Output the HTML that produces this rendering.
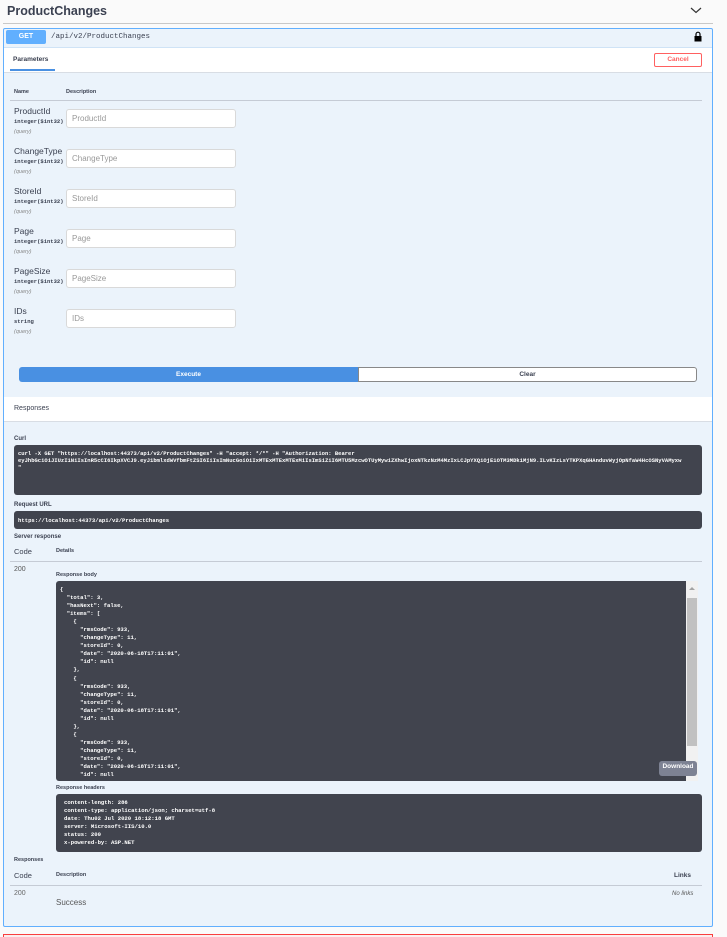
<!DOCTYPE html>
<html><head><meta charset="utf-8"><style>
*{margin:0;padding:0;box-sizing:border-box}
html,body{width:727px;height:937px;overflow:hidden}
body{background:#fafafa;position:relative;font-family:"Liberation Sans",sans-serif;color:#3b4151}
.a{position:absolute;white-space:nowrap}
.m{font-family:"Liberation Mono",monospace;font-weight:bold}
.dark{position:absolute;background:#41444e;border-radius:3px;overflow:hidden}
.inp{position:absolute;left:66px;width:170px;height:19px;background:#fff;border:1px solid #d9d9d9;border-radius:3px;font-size:8px;color:#999;padding:4px 0 0 5px}
.pn{font-size:8.5px;color:#3b4151}
.pt{font-size:5.5px;color:#3b4151}
.pq{font-size:5.5px;font-style:italic;color:#888}
.lbl{font-size:6px;font-weight:bold;color:#3b4151}
pre{font-family:"Liberation Mono",monospace;font-weight:bold;color:#fff;font-size:5.6px;line-height:8.05px;white-space:pre !important}
</style></head><body>
<div class="a" style="left:7px;top:4px;font-size:12.5px;font-weight:bold;color:#3b4151">ProductChanges</div>
<svg class="a" style="left:689px;top:5px" width="14" height="10" viewBox="0 0 14 10"><path d="M2 3 L7 7.5 L12 3" fill="none" stroke="#333" stroke-width="1.2"/></svg>
<div class="a" style="left:3px;top:23px;width:710px;height:1px;background:#c8c8c8"></div>
<div class="a" style="left:3px;top:28px;width:710px;height:899px;background:#ebf3fb;border:1px solid #61affe;border-radius:2px"></div>
<div class="a" style="left:6px;top:30px;width:40px;height:14px;background:#61affe;border-radius:2px;color:#fff;font-size:7px;font-weight:bold;text-align:center;line-height:14px">GET</div>
<div class="a m" style="left:51px;top:33px;font-size:7.5px;font-weight:normal;color:#3b4151">/api/v2/ProductChanges</div>
<svg class="a" style="left:694px;top:31px" width="8" height="11" viewBox="0 0 8 11"><path d="M2 5V3.2a2 2 0 0 1 4 0V5" fill="none" stroke="#000" stroke-width="1.2"/><rect x="0.5" y="5" width="7" height="5.5" fill="#000"/></svg>
<div class="a" style="left:4px;top:47px;width:708px;height:26px;background:#fff;border-top:1px solid #cfe3f6;border-bottom:1px solid #d8dde4"></div>
<div class="a" style="left:13px;top:56px;font-size:6.5px;font-weight:bold">Parameters</div>
<div class="a" style="left:10px;top:69px;width:45px;height:2px;background:#4990e2"></div>
<div class="a" style="left:654px;top:53px;width:48px;height:14px;border:1px solid #ff6060;border-radius:2px;color:#ff6060;font-size:6.5px;font-weight:bold;text-align:center;line-height:12px">Cancel</div>
<div class="a lbl" style="left:14px;top:89px;font-size:5.5px">Name</div>
<div class="a lbl" style="left:66px;top:89px;font-size:5.5px">Description</div>
<div class="a" style="left:10px;top:100px;width:692px;height:1px;background:#c5cbd5"></div>

<div class="a pn" style="left:14px;top:106px">ProductId</div><div class="a pt m" style="left:14px;top:118px">integer($int32)</div><div class="a pq" style="left:14px;top:129px">(query)</div><div class="inp" style="top:109px">ProductId</div>
<div class="a pn" style="left:14px;top:146px">ChangeType</div><div class="a pt m" style="left:14px;top:158px">integer($int32)</div><div class="a pq" style="left:14px;top:169px">(query)</div><div class="inp" style="top:149px">ChangeType</div>
<div class="a pn" style="left:14px;top:186px">StoreId</div><div class="a pt m" style="left:14px;top:198px">integer($int32)</div><div class="a pq" style="left:14px;top:209px">(query)</div><div class="inp" style="top:189px">StoreId</div>
<div class="a pn" style="left:14px;top:226px">Page</div><div class="a pt m" style="left:14px;top:238px">integer($int32)</div><div class="a pq" style="left:14px;top:249px">(query)</div><div class="inp" style="top:229px">Page</div>
<div class="a pn" style="left:14px;top:266px">PageSize</div><div class="a pt m" style="left:14px;top:278px">integer($int32)</div><div class="a pq" style="left:14px;top:289px">(query)</div><div class="inp" style="top:269px">PageSize</div>
<div class="a pn" style="left:14px;top:306px">IDs</div><div class="a pt m" style="left:14px;top:318px">string</div><div class="a pq" style="left:14px;top:329px">(query)</div><div class="inp" style="top:309px">IDs</div>

<div class="a" style="left:19px;top:367px;width:339px;height:15px;background:#4990e2;border-radius:3px 0 0 3px;color:#fff;font-size:6.5px;font-weight:bold;text-align:center;line-height:15px">Execute</div>
<div class="a" style="left:358px;top:367px;width:339px;height:15px;background:#fff;border:1px solid #888;border-radius:0 3px 3px 0;font-size:6.5px;font-weight:bold;text-align:center;line-height:13px">Clear</div>
<div class="a" style="left:4px;top:397px;width:708px;height:25px;background:#fff;border-bottom:1px solid #d8dde4"></div>
<div class="a" style="left:14px;top:405px;font-size:7px">Responses</div>

<div class="a lbl" style="left:14px;top:436px">Curl</div>
<div class="dark" style="left:14px;top:445px;width:688px;height:50px">
<div class="a m" style="left:4px;top:5px;font-size:5.5px;color:#fff;line-height:7px">curl -X GET "https://localhost:44373/api/v2/ProductChanges" -H "accept: */*" -H "Authorization: Bearer<br>eyJhbGciOiJIUzI1NiIsInR5cCI6IkpXVCJ9.eyJ1bmlxdWVfbmFtZSI6IiIsImNucGoiOiIxMTExMTExMTExMiIsImSiZiI6MTU5MzcwOTUyMywiZXhwIjoxNTkzNzM4MzIxLCJpYXQiOjE1OTM3MDk1MjN9.ILvKIzLsYTKPXqGHAnduvWyjOpNfaW4HcOSNyVAMyxw<br>"</div>
</div>
<div class="a lbl" style="left:14px;top:502px">Request URL</div>
<div class="dark" style="left:14px;top:511px;width:688px;height:18px"></div>
<div class="a m" style="left:18px;top:517px;font-size:5.6px;color:#fff">https://localhost:44373/api/v2/ProductChanges</div>
<div class="a lbl" style="left:14px;top:534px">Server response</div>
<div class="a" style="left:14px;top:547px;font-size:7.5px">Code</div>
<div class="a lbl" style="left:56px;top:548px;font-size:5.5px">Details</div>
<div class="a" style="left:10px;top:561px;width:692px;height:1px;background:#c5cbd5"></div>
<div class="a" style="left:14px;top:566px;font-size:7px;color:#555">200</div>
<div class="a lbl" style="left:56px;top:572px;font-size:5.5px">Response body</div>
<div class="dark" style="left:56px;top:581px;width:632px;height:200px;border-radius:3px 0 0 3px"></div>
<pre style="position:absolute;left:60px;top:586px">{
  "total": 3,
  "hasNext": false,
  "items": [
    {
      "rmsCode": 933,
      "changeType": 11,
      "storeId": 0,
      "date": "2020-06-18T17:11:01",
      "id": null
    },
    {
      "rmsCode": 933,
      "changeType": 11,
      "storeId": 0,
      "date": "2020-06-18T17:11:01",
      "id": null
    },
    {
      "rmsCode": 933,
      "changeType": 11,
      "storeId": 0,
      "date": "2020-06-18T17:11:01",
      "id": null</pre>
<div class="a" style="left:686px;top:581px;width:12px;height:200px;background:#f1f1f1"></div>
<div class="a" style="left:689px;top:587px;width:0;height:0;border-left:3px solid transparent;border-right:3px solid transparent;border-bottom:3px solid #a3a3a3"></div>
<div class="a" style="left:687px;top:598px;width:10px;height:148px;background:#c1c1c1"></div>
<div class="a" style="left:659px;top:761px;width:38px;height:15px;background:#7d8293;border-radius:3px;color:#fff;font-size:6.5px;font-weight:bold;text-align:center;line-height:12px">Download</div>
<div class="a lbl" style="left:56px;top:785px;font-size:5.5px">Response headers</div>
<div class="dark" style="left:56px;top:794px;width:646px;height:58px"></div>
<pre style="position:absolute;left:64px;top:799px">content-length: 286
content-type: application/json; charset=utf-8
date: Thu02 Jul 2020 18:12:18 GMT
server: Microsoft-IIS/10.0
status: 200
x-powered-by: ASP.NET</pre>
<div class="a lbl" style="left:14px;top:857px;font-size:5.5px">Responses</div>
<div class="a" style="left:14px;top:871px;font-size:7.5px">Code</div>
<div class="a lbl" style="left:56px;top:872px;font-size:5.5px">Description</div>
<div class="a lbl" style="left:674px;top:872px;font-size:6.5px">Links</div>
<div class="a" style="left:10px;top:885px;width:692px;height:1px;background:#c5cbd5"></div>
<div class="a" style="left:14px;top:890px;font-size:7px;color:#666">200</div>
<div class="a" style="left:672px;top:891px;font-size:6px;font-style:italic;color:#555">No links</div>
<div class="a" style="left:56px;top:898px;font-size:8px;color:#555">Success</div>
<div class="a" style="left:3px;top:934px;width:710px;height:3px;background:#fbeeee;border:1px solid #f93e3e;border-bottom:none"></div>
</body></html>
